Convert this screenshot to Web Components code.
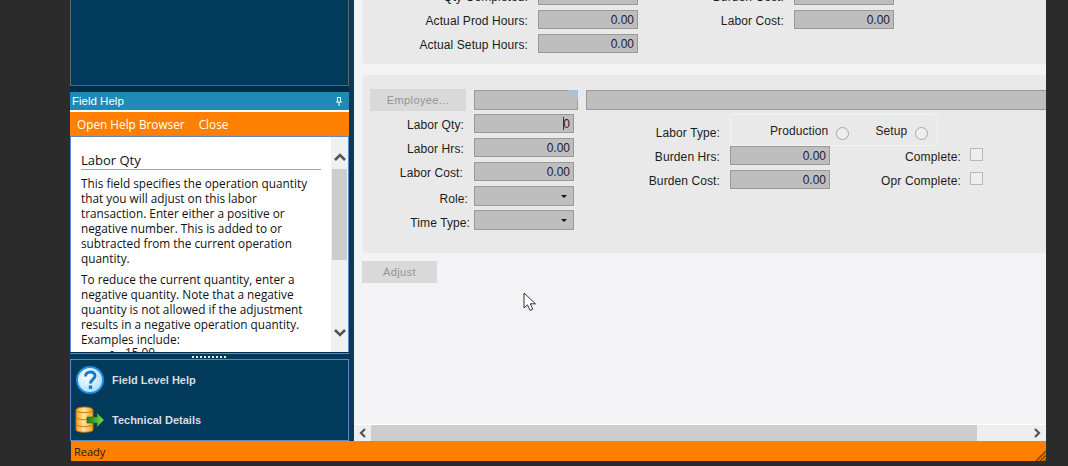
<!DOCTYPE html>
<html>
<head>
<meta charset="utf-8">
<title>Field Help</title>
<style>
  html, body { margin: 0; height: 466px; overflow: hidden; background: #2b2b2b; }
  .cols { display: flex; }
  .col { display: flex; flex-direction: column; }
  .row { display: flex; }
  .top-row { display: flex; align-items: flex-start; height: 25px; }
  .box {
    height: 20px;
    margin-top: 1px;
    box-sizing: border-box;
    background: #bebebe;
    border: 1px solid #9a9a9a;
  }
  .corner { position: relative; width: 104px; margin-left: 8px; }
  .corner::after {
    content: "";
    position: absolute;
    top: -1px;
    right: -1px;
    border-style: solid;
    border-width: 0 10px 10px 0;
    border-color: transparent #a9c0e0 transparent transparent;
  }
  .wide { flex: 1; margin-left: 8px; border-right: 0; }
  .type-row { display: flex; height: 32px; }
  .type-label { width: 146px; margin-right: 10px; padding-top: 12px; box-sizing: border-box; text-align: right; letter-spacing: .1px; }
</style>
</head>
<body>
<erp-window>
  <help-panel slot="side">
    <help-article heading="Labor Qty">
      <p>This field specifies the operation quantity that you will adjust on this labor transaction. Enter either a positive or negative number. This is added to or subtracted from the current operation quantity.</p>
      <p>To reduce the current quantity, enter a negative quantity. Note that a negative quantity is not allowed if the adjustment results in a negative operation quantity. Examples include:</p>
      <ul><li>15.00</li></ul>
    </help-article>
  </help-panel>

  <form-card class="first" slot="main">
    <div class="cols">
      <div class="col">
        <form-field label="Qty Completed:" label-width="165" value=""></form-field>
        <form-field label="Actual Prod Hours:" label-width="165" value="0.00"></form-field>
        <form-field label="Actual Setup Hours:" label-width="165" value="0.00"></form-field>
      </div>
      <div class="col">
        <form-field label="Burden Cost:" label-width="146" value=""></form-field>
        <form-field label="Labor Cost:" label-width="146" value="0.00"></form-field>
      </div>
    </div>
  </form-card>

  <form-card class="second" slot="main">
    <div class="top-row">
      <flat-button>Employee...</flat-button>
      <div class="box corner"></div>
      <div class="box wide"></div>
    </div>
    <div class="cols">
      <div class="col">
        <form-field label="Labor Qty:" label-width="94" label-gap="10" caret value="0"></form-field>
        <form-field label="Labor Hrs:" label-width="94" label-gap="10" value="0.00"></form-field>
        <form-field label="Labor Cost:" label-width="93" label-gap="11" value="0.00"></form-field>
        <form-field label="Role:" label-width="98" label-gap="6" combo></form-field>
        <form-field label="Time Type:" label-width="100" label-gap="4" combo></form-field>
      </div>
      <div class="col">
        <div class="type-row">
          <span class="type-label">Labor Type:</span>
          <radio-group>
            <radio-item style="margin-left:39px;--gap:8px">Production</radio-item>
            <radio-item style="margin-left:26px;--gap:8px">Setup</radio-item>
          </radio-group>
        </div>
        <div class="row">
          <form-field label="Burden Hrs:" label-width="146" value="0.00"></form-field>
          <check-field>Complete:</check-field>
        </div>
        <div class="row">
          <form-field label="Burden Cost:" label-width="146" value="0.00"></form-field>
          <check-field>Opr Complete:</check-field>
        </div>
      </div>
    </div>
  </form-card>

  <flat-button class="adjust" slot="main">Adjust</flat-button>
</erp-window>

<script>
customElements.define('erp-window', class extends HTMLElement {
  constructor() {
    super()
    this.attachShadow({mode: 'open'})
    this.shadowRoot.innerHTML = `
    <style>
      :host {
        display: flex;
        flex-direction: column;
        position: relative;
        width: 976px;
        height: 461px;
        margin-left: 70px;
        font-family: "Liberation Sans", Arial, sans-serif;
        font-size: 12px;
        color: #1c1c1c;
      }
      .body { display: flex; height: 441px; background: #0b3857; }
      .side { display: flex; width: 279px; flex: none; }
      .main {
        display: flex;
        flex-direction: column;
        width: 692px;
        margin-left: 5px;
        background: #f3f3f6;
        overflow: hidden;
      }
      .content {
        flex: 1;
        min-height: 0;
        overflow: hidden;
        padding-left: 8px;
      }
      .hscroll {
        display: flex;
        align-items: center;
        flex: none;
        height: 16px;
        padding: 0 4px 0 5px;
        background: #eeeeee;
        border-top: 1px solid #fff;
      }
      .thumb { width: 606px; height: 16px; background: #cdcdcd; }
      .hscroll svg { flex: none; }
      .hscroll .end { margin-left: auto; }
      .status {
        display: flex;
        align-items: center;
        height: 20px;
        padding-left: 3px;
        margin-left: 1px;
        background: #ff7f00;
        border-top: 1px solid #c98b50;
        box-sizing: border-box;
        color: #2a1a08;
        font-family: "Open Sans", sans-serif;
        font-size: 11px;
      }
      .grip { position: absolute; right: 0; bottom: 0; }
      .cursor { position: absolute; left: 453px; top: 292px; }
    </style>
    <div class="body">
      <div class="side"><slot name="side"></slot></div>
      <div class="main">
        <div class="content"><slot name="main"></slot></div>
        <div class="hscroll">
          <svg width="12" height="12" viewBox="0 0 12 12"><path d="M6 2 2 6l4 4" fill="none" stroke="#555" stroke-width="2.200"/></svg>
          <div class="thumb"></div>
          <svg class="end" width="10" height="12" viewBox="0 0 10 12"><path d="M3 2l4 4-4 4" fill="none" stroke="#555" stroke-width="2.200"/></svg>
        </div>
      </div>
    </div>
    <div class="status">Ready</div>
    <svg class="grip" width="11" height="11" viewBox="0 0 11 11">
      <path d="M0 11 11 0M4 11l7-7M8 11l3-3" stroke="#1f8ab8" stroke-width="1"/>
      <path d="M1.500 11 11 1.500M5.500 11 11 5.500M9.500 11 11 9.500" stroke="#22201c" stroke-width="1"/>
    </svg>
    <svg class="cursor" width="14" height="20" viewBox="0 0 14 20">
      <path d="M1 1v15l3.500-3.200 2.500 5.600 2.800-1.200-2.500-5.400H12.500Z" fill="#fff" stroke="#333" stroke-width="1" stroke-linejoin="round"/>
    </svg>
    `
  }
})

customElements.define('help-panel', class extends HTMLElement {
  constructor() {
    super()
    this.attachShadow({mode: 'open'})
    this.shadowRoot.innerHTML = `
    <style>
      :host {
        display: flex;
        flex-direction: column;
        width: 279px;
        height: 441px;
        background: #012c49;
        color: #fff;
      }
      .upper {
        height: 86px;
        flex: none;
        box-sizing: border-box;
        background: #023a5c;
        border: 1px solid #5a6670;
        border-top: 0;
      }
      .title {
        display: flex;
        align-items: center;
        justify-content: space-between;
        height: 18px;
        margin-top: 6px;
        padding: 0 6px 0 2px;
        background: #1f8ab8;
        font-size: 11.500px;
        flex: none;
      }
      .tools {
        display: flex;
        align-items: center;
        gap: 14px;
        height: 24px;
        padding-left: 7px;
        background: #ff7f00;
        border-top: 2px solid #fff;
        font-family: "Open Sans", sans-serif;
        font-size: 11.800px;
        flex: none;
      }
      .page {
        display: flex;
        height: 216px;
        flex: none;
        box-sizing: border-box;
        background: #fff;
        border: 1px solid #5f88c8;
        border-bottom: 0;
      }
      .scroll {
        display: flex;
        flex-direction: column;
        align-items: center;
        width: 17px;
        flex: none;
        margin-left: auto;
        background: #f0f0f0;
      }
      .scroll .bar { width: 15px; height: 91px; margin: 7px 0 auto; background: #cdcdcd; }
      .scroll svg { flex: none; }
      .scroll .up { margin-top: 15px; }
      .scroll .down { margin-bottom: 14px; }
      .split {
        display: flex;
        justify-content: center;
        align-items: center;
        height: 5px;
        margin-top: 1px;
        flex: none;
        background: #023a5c;
        border-top: 1px solid #5f88c8;
        border-bottom: 1px solid #5f88c8;
      }
      .dots { width: 36px; height: 2px; background: repeating-linear-gradient(90deg, #dfe8f2 0 2px, #0b3857 2px 4px); }
      .links {
        flex: 1;
        display: flex;
        flex-direction: column;
        background: #023a5c;
        border: 1px solid #5f88c8;
        border-top: 0;
      }
    </style>
    <div class="upper"></div>
    <div class="title">
      <span>Field Help</span>
      <svg width="8" height="9" viewBox="0 0 8 9"><path d="M2 .5h4M2.500 .5v4M5.500 .5v4M1 5h6M4 5v4" fill="none" stroke="#fff" stroke-width="1"/></svg>
    </div>
    <div class="tools"><span>Open Help Browser</span><span>Close</span></div>
    <div class="page">
      <slot></slot>
      <div class="scroll">
        <svg class="up" width="14" height="10" viewBox="0 0 14 10"><path d="M2 8l5-5 5 5" fill="none" stroke="#555" stroke-width="2.600"/></svg>
        <div class="bar"></div>
        <svg class="down" width="14" height="10" viewBox="0 0 14 10"><path d="M2 2l5 5 5-5" fill="none" stroke="#555" stroke-width="2.600"/></svg>
      </div>
    </div>
    <div class="split"><div class="dots"></div></div>
    <div class="links">
      <help-link label="Field Level Help">
        <svg width="30" height="30" viewBox="0 0 30 30">
          <defs><radialGradient id="q" cx=".4" cy=".35" r=".7"><stop offset="0" stop-color="#ffffff"/><stop offset="1" stop-color="#a9dcfa"/></radialGradient></defs>
          <circle cx="15" cy="15" r="13" fill="url(#q)" stroke="#1d8fe0" stroke-width="2"/>
          <path d="M10.500 11.500c0-6 9.500-6 9.500-.5 0 3.500-4.500 3.500-4.500 7.500" fill="none" stroke="#1278d0" stroke-width="3"/>
          <rect x="13.800" y="20.500" width="3.400" height="3.400" fill="#1278d0"/>
        </svg>
      </help-link>
      <help-link label="Technical Details">
        <svg width="30" height="30" viewBox="0 0 30 30">
          <defs>
            <linearGradient id="d" x1="0" x2="1" y1="0" y2="0"><stop offset="0" stop-color="#f6a21e"/><stop offset=".45" stop-color="#ffe39a"/><stop offset="1" stop-color="#f2a01c"/></linearGradient>
            <linearGradient id="a" x1="0" x2="1" y1="0" y2="0"><stop offset="0" stop-color="#157a1c"/><stop offset="1" stop-color="#7ee04e"/></linearGradient>
          </defs>
          <path d="M1 5c0-4 17-4 17 0v20c0 3-17 3-17 0Z" fill="url(#d)" stroke="#b86e08"/>
          <path d="M1 5c0 3.500 17 3.500 17 0M1 12c0 3.500 17 3.500 17 0M1 19c0 3.500 17 3.500 17 0" fill="none" stroke="#c77a10"/>
          <path d="M12 12h10V8l7 7-7 7v-4H12Z" fill="url(#a)" stroke="#1c6b20" stroke-width=".6"/>
        </svg>
      </help-link>
    </div>
    `
  }
})

customElements.define('help-article', class extends HTMLElement {
  constructor() {
    super()
    this.attachShadow({mode: 'open'})
    this.shadowRoot.innerHTML = `
    <style>
      :host {
        display: block;
        box-sizing: border-box;
        width: 260px;
        height: 215px;
        overflow: hidden;
        padding: 15px 10px 0 10px;
        color: #111;
        font-family: "Open Sans", sans-serif;
        font-size: 11.800px;
        line-height: 15px;
      }
      h3 {
        margin: 0 0 6px;
        font-size: 13px;
        font-weight: 400;
        line-height: 17px;
        border-bottom: 1px solid #8fa4d8;
      }
      ::slotted(p) { margin: 0 0 6px; max-width: 238px; }
      ::slotted(ul) { margin: -8px 0 0; padding-left: 44px; }
    </style>
    <h3></h3>
    <slot></slot>
    `
    this.shadowRoot.querySelector('h3').textContent = this.getAttribute('heading')
  }
})

customElements.define('help-link', class extends HTMLElement {
  constructor() {
    super()
    this.attachShadow({mode: 'open'})
    this.shadowRoot.innerHTML = `
    <style>
      :host {
        display: flex;
        align-items: center;
        height: 40px;
        padding-left: 4px;
        color: #d8dde2;
        font-size: 11px;
        font-weight: 700;
      }
      span { margin-left: 7px; }
    </style>
    <slot></slot><span></span>
    `
    this.shadowRoot.querySelector('span').textContent = this.getAttribute('label')
  }
})

customElements.define('form-card', class extends HTMLElement {
  constructor() {
    super()
    this.attachShadow({mode: 'open'})
    this.shadowRoot.innerHTML = `
    <style>
      :host {
        display: block;
        box-sizing: border-box;
        margin-left: 1px;
        background: #e9e9e9;
        border-radius: 3px 0 0 3px;
        overflow: hidden;
      }
      :host(.first) { margin-top: -14px; height: 78px; }
      :host(.second) { margin-top: 11px; height: 178px; padding: 14px 0 0 7px; }
    </style>
    <slot></slot>
    `
  }
})

customElements.define('form-field', class extends HTMLElement {
  constructor() {
    super()
    this.attachShadow({mode: 'open'})
    const labelWidth = this.getAttribute('label-width') || 100
    const gap = this.getAttribute('label-gap') || 10
    const combo = this.hasAttribute('combo')
    const value = this.getAttribute('value') || ''
    this.shadowRoot.innerHTML = `
    <style>
      :host { display: flex; height: 24px; flex: none; }
      label {
        width: ${labelWidth}px;
        margin-right: ${gap}px;
        padding-top: ${combo ? 6 : 4}px;
        box-sizing: border-box;
        text-align: right;
        white-space: nowrap;
        letter-spacing: .1px;
      }
      .box {
        display: flex;
        align-items: center;
        justify-content: flex-end;
        width: 100px;
        height: ${combo ? 20 : 19}px;
        padding-right: 3px;
        box-sizing: border-box;
        background: #bebebe;
        border: 1px solid #9a9a9a;
        color: #222;
      }
      .caret { position: relative; width: 1px; height: 13px; margin-right: -1px; background: #333; }
      svg { margin-right: 3px; }
    </style>
    <label></label>
    <div class="box">
      ${this.hasAttribute('caret') ? '<i class="caret"></i>' : ''}
      ${combo ? '<svg width="6" height="3" viewBox="0 0 6 3"><path d="M0 0h6L3 3Z" fill="#111"/></svg>' : '<span class="value"></span>'}
    </div>
    `
    this.shadowRoot.querySelector('label').textContent = this.getAttribute('label')
    const span = this.shadowRoot.querySelector('.value')
    if (span) span.textContent = value
  }
})

customElements.define('flat-button', class extends HTMLElement {
  constructor() {
    super()
    this.attachShadow({mode: 'open'})
    this.shadowRoot.innerHTML = `
    <style>
      :host {
        display: flex;
        align-items: center;
        justify-content: center;
        box-sizing: border-box;
        width: 96px;
        height: 22px;
        flex: none;
        background: #d9d9d9;
        color: #949494;
        letter-spacing: .4px;
        font-size: 11px;
      }
      :host(.adjust) { width: 75px; margin-top: 8px; }
    </style>
    <slot></slot>
    `
  }
})

customElements.define('radio-group', class extends HTMLElement {
  constructor() {
    super()
    this.attachShadow({mode: 'open'})
    this.shadowRoot.innerHTML = `
    <style>
      :host {
        display: flex;
        align-items: center;
        box-sizing: border-box;
        width: 208px;
        height: 32px;
        padding-top: 4px;
        border: 1px solid #f2f2f2;
        border-radius: 3px;
      }
    </style>
    <slot></slot>
    `
  }
})

customElements.define('radio-item', class extends HTMLElement {
  constructor() {
    super()
    this.attachShadow({mode: 'open'})
    this.shadowRoot.innerHTML = `
    <style>
      :host { display: flex; align-items: center; }
      i {
        width: 13px;
        height: 13px;
        margin: 3px 0 0 var(--gap, 8px);
        box-sizing: border-box;
        border: 1px solid #a8a8a8;
        border-radius: 50%;
        background: #eeeeee;
      }
      span { margin-top: -2px; letter-spacing: .1px; }
    </style>
    <span><slot></slot></span><i></i>
    `
  }
})

customElements.define('check-field', class extends HTMLElement {
  constructor() {
    super()
    this.attachShadow({mode: 'open'})
    this.shadowRoot.innerHTML = `
    <style>
      :host { display: flex; height: 24px; width: 153px; justify-content: flex-end; }
      span { padding-top: 4px; letter-spacing: .15px; }
      i {
        width: 13px;
        height: 13px;
        margin: 2px 0 0 9px;
        box-sizing: border-box;
        border: 1px solid #b8b8b8;
        background: #eeeeee;
      }
    </style>
    <span><slot></slot></span><i></i>
    `
  }
})
</script>
</body>
</html>
